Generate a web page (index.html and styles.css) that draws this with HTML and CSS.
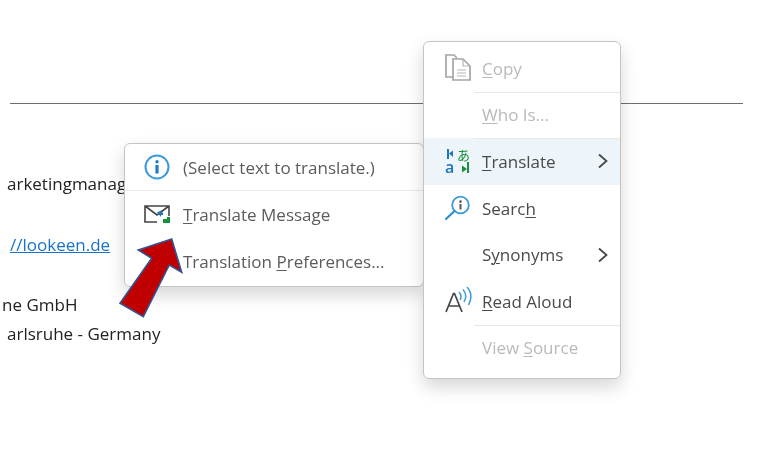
FILE: index.html
```
<!DOCTYPE html>
<html lang="en">
<head>
<meta charset="utf-8">
<title>Translate menu</title>
<link rel="stylesheet" href="styles.css">
</head>
<body>
<div class="page">
  <main class="mail">
    <hr class="rule">
    <p class="line first">arketingmanager</p>
    <p class="line second"><a class="link" href="#">//lookeen.de</a></p>
    <p class="line third clip">ne GmbH</p>
    <p class="line fourth">arlsruhe - Germany</p>
  </main>

  <div class="menu sub">
    <div class="row info">
      <span class="icon"><svg width="28" height="28" viewBox="0 0 28 28"><circle cx="14" cy="14" r="11.5" fill="none" stroke="#3a9ad9" stroke-width="2"/><circle cx="14" cy="8.8" r="1.7" fill="#1f7fc4"/><rect x="12.4" y="12" width="3.2" height="8.5" fill="#1f7fc4"/></svg></span>
      <span class="label">(Select text to translate.)</span>
    </div>
    <div class="row">
      <span class="icon"><svg width="28" height="24" viewBox="0 0 28 24"><path d="M14 19H2V3h24v10M2 3l12 9 12-9" fill="none" stroke="#444" stroke-width="1.6"/><path d="M14 9.500l4-2v2h2v2.500h-2v2z" fill="#1f74c0"/><path d="M20 16h4v-2l3 0v6h-7z" fill="#17913a"/></svg></span>
      <span class="label"><u>T</u>ranslate Message</span>
    </div>
    <div class="row">
      <span class="icon"></span>
      <span class="label">Translation <u>P</u>references...</span>
    </div>
  </div>

  <div class="menu main">
    <div class="row">
      <span class="icon"><svg width="28" height="28" viewBox="0 0 28 28"><path d="M11 23H2V1h8l3 3" fill="none" stroke="#a5a5a5" stroke-width="1.700"/><path d="M9 5h10l7 7v14H9z" fill="#fff" stroke="#a5a5a5" stroke-width="1.700"/><path d="M19 5v7h7M13 16h9M13 19h9M13 22h9" fill="none" stroke="#b5b5b5" stroke-width="1.200"/></svg></span>
      <span class="label off"><u>C</u>opy</span>
    </div>
    <div class="row sep">
      <span class="icon"></span>
      <span class="label off"><u>W</u>ho Is...</span>
    </div>
    <div class="row sep active">
      <span class="icon"><svg width="28" height="28" viewBox="0 0 28 28"><path d="M3 2v10h2V6.500l4 3.500V3.500L5 6.500V2z" fill="#1f74c0"/><text class="glyph-a" x="1" y="26">a</text><text class="glyph-j" x="13" y="13">あ</text><path d="M25 15v11h-2v-4l-5 3.500v-7l5 3.500v-7z" fill="#17913a"/></svg></span>
      <span class="label"><u>T</u>ranslate</span>
      <span class="chev"><svg width="12" height="16" viewBox="0 0 12 16"><path d="M2 1.500 9.500 8 2 14.500" fill="none" stroke="#444" stroke-width="1.700"/></svg></span>
    </div>
    <div class="row">
      <span class="icon"><svg width="28" height="28" viewBox="0 0 28 28"><circle cx="16.500" cy="11" r="8.300" fill="none" stroke="#3a9ad9" stroke-width="1.800"/><path d="M10.500 17 2 25" stroke="#2e8fd0" stroke-width="2.200" stroke-linecap="round"/><circle cx="16.500" cy="7.600" r="1.300" fill="#555"/><rect x="15.500" y="10" width="2" height="5.500" fill="#555"/></svg></span>
      <span class="label">Searc<u>h</u></span>
    </div>
    <div class="row">
      <span class="icon"></span>
      <span class="label">S<u>y</u>nonyms</span>
      <span class="chev"><svg width="12" height="16" viewBox="0 0 12 16"><path d="M2 1.500 9.500 8 2 14.500" fill="none" stroke="#444" stroke-width="1.700"/></svg></span>
    </div>
    <div class="row">
      <span class="icon"><svg width="28" height="28" viewBox="0 0 28 28"><path d="M2 25 9.500 6.500h1L18 25M5 19h10.500" fill="none" stroke="#444" stroke-width="1.700"/><path d="M15 5q3.500 3.500 1 8M19 2.500q5 5.500 1 12.500M23 0q7 8 1.500 18" fill="none" stroke="#3a9ad9" stroke-width="1.500"/></svg></span>
      <span class="label"><u>R</u>ead Aloud</span>
    </div>
    <div class="row sep">
      <span class="icon"></span>
      <span class="label off">View <u>S</u>ource</span>
    </div>
  </div>

  <svg class="arrow" width="80" height="90" viewBox="110 235 80 90">
    <path d="M171.700 239 181.700 272.300 169.300 265 143.300 316.700 120 303.300 151.700 258.300 138.300 250z" fill="#c00000" stroke="#2f5597" stroke-width="1.600"/>
  </svg>
</div>
</body>
</html>
```

FILE: styles.css
```
* { box-sizing: border-box; }
html, body { margin: 0; height: 100%; background: #fff; }
body { overflow: hidden; }

.page {
  position: relative;
  width: 768px;
  height: 467px;
  overflow: hidden;
  font-family: "Open Sans", "Noto Sans", sans-serif;
  filter: blur(0.45px);
}

.mail {
  padding: 103px 25px 0 7px;
  color: #222;
  font-size: 17px;
  line-height: 24px;
}
.rule {
  margin: 0 0 0 3px;
  height: 1px;
  border: 0;
  background: #6e6e6e;
}
.line { margin: 0; white-space: nowrap; }
.first { margin-top: 68px; }
.second { margin-top: 37px; margin-left: 3px; }
.third { margin-top: 36px; margin-left: -5px; }
.fourth { margin-top: 5px; }
.link { color: #1a73c8; }

.menu {
  position: absolute;
  background: #fff;
  border: 1.500px solid #c4c4c4;
  border-radius: 6px;
  box-shadow: 0 8px 18px rgba(0, 0, 0, 0.16);
  font-size: 17px;
  color: #4a4a4a;
}
.sub { left: 124px; top: 143px; width: 300px; height: 144px; }
.main { left: 423px; top: 41px; width: 198px; height: 338px; padding-top: 3px; }

.row {
  display: flex;
  align-items: center;
  height: 46.600px;
  position: relative;
}
.sub .row { height: 47px; }
.sub .info { height: 47px; border-bottom: 1px solid #ebebeb; }
.icon {
  flex: none;
  width: 58px;
  padding-left: 18px;
  display: flex;
  align-items: center;
}
.main .icon { padding-left: 20px; }
.icon svg { display: block; }
.label { white-space: nowrap; }
.off { color: #b9b9b9; }
.sub .label { color: #5c5c5c; margin-left: 0; }
.main .row .chev {
  position: absolute;
  right: 11px;
  top: 50%;
  transform: translateY(-50%);
  display: flex;
}
.active { background: #edf4fa; }
.sep::before {
  content: "";
  position: absolute;
  left: 50px;
  right: 0;
  top: 0;
  height: 1px;
  background: #e8e8e8;
}
.active::before { background: #e8e8e8; }
u { text-underline-offset: 2px; text-decoration-thickness: 1px; }

.glyph-a { font-family: "Open Sans", sans-serif; font-size: 16px; font-weight: 600; fill: #1f74c0; }
.glyph-j { font-family: "Noto Sans CJK JP", sans-serif; font-size: 13px; fill: #17913a; }

.arrow { position: absolute; left: 110px; top: 235px; }
```
